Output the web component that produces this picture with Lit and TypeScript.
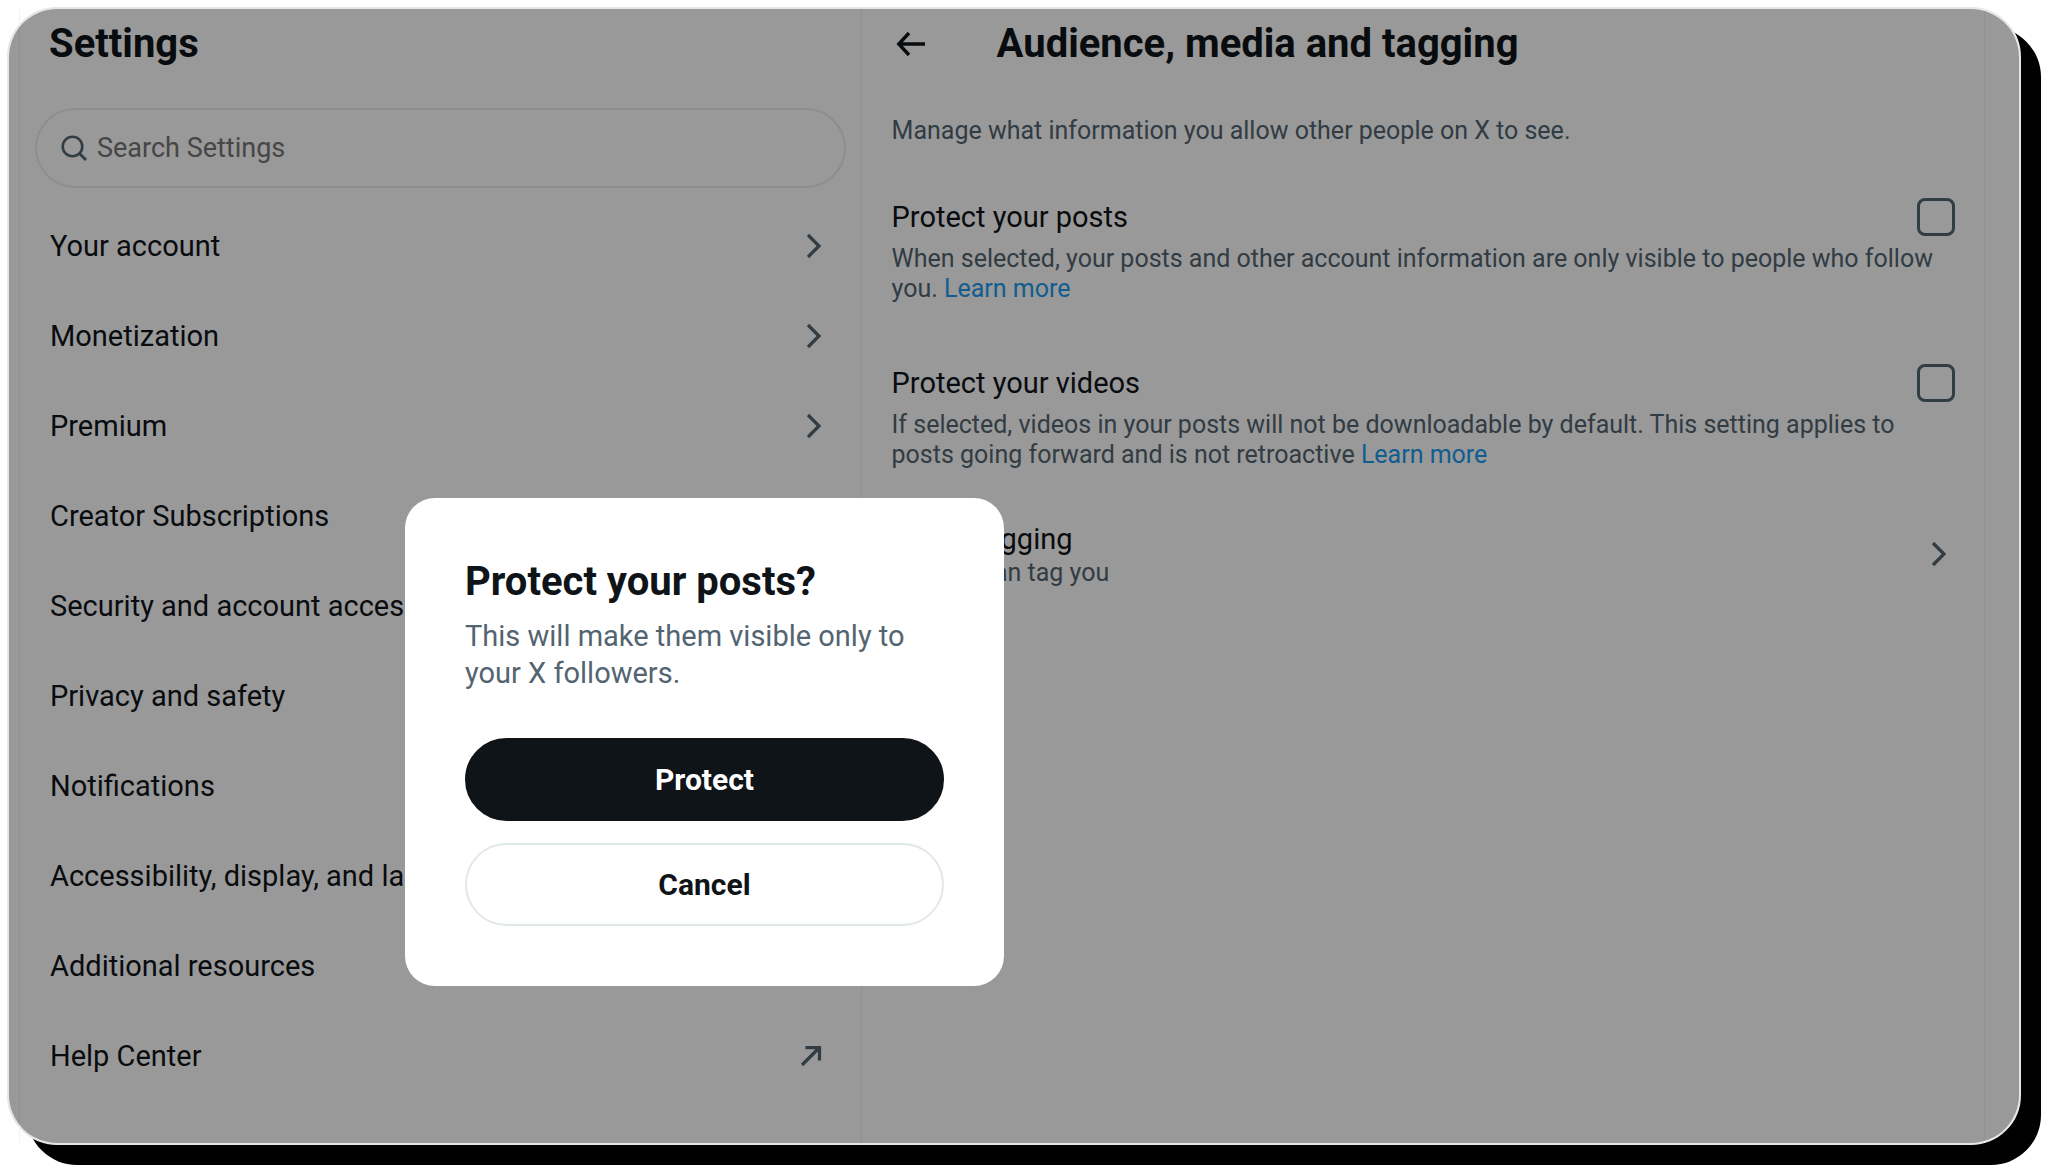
import { LitElement, html, css, svg } from "lit";
import { customElement, property, state } from "lit/decorators.js";

const chevron = html`<svg class="chevron" viewBox="0 0 16 26" width="16" height="26" aria-hidden="true">
  ${svg`<path d="M2 2 L13 13 L2 24" fill="none" stroke="#536471" stroke-width="3.2" />`}
</svg>`;

const external = html`<svg class="external" viewBox="0 0 22 22" width="22" height="22" aria-hidden="true">
  ${svg`<path d="M2 20 L19 3 M5.500 2.600 H19.500 V15.500" fill="none" stroke="#536471" stroke-width="3.2" />`}
</svg>`;

interface NavItem {
  label: string;
  external?: boolean;
}

const NAV: NavItem[] = [
  { label: "Your account" },
  { label: "Monetization" },
  { label: "Premium" },
  { label: "Creator Subscriptions" },
  { label: "Security and account access" },
  { label: "Privacy and safety" },
  { label: "Notifications" },
  { label: "Accessibility, display, and languages" },
  { label: "Additional resources" },
  { label: "Help Center", external: true },
];

@customElement("settings-nav")
class SettingsNav extends LitElement {
  static styles = css`
    :host {
      display: block;
      padding-top: 11px;
      border-left: 1px solid #eff3f4;
      border-right: 1px solid #eff3f4;
      box-sizing: border-box;
      min-width: 0;
    }
    .title {
      margin: 0;
      padding: 0 29px;
      font-size: 40px;
      line-height: 48px;
      font-weight: 700;
    }
    .search {
      display: flex;
      align-items: center;
      gap: 10px;
      height: 80px;
      box-sizing: border-box;
      margin: 40px 15px 13px;
      padding: 0 24px;
      border: 2px solid #e9ecee;
      border-radius: 40px;
    }
    .search svg {
      flex: none;
    }
    .field {
      flex: 1;
      min-width: 0;
      padding: 0;
      border: 0;
      outline: 0;
      background: transparent;
      color: #0f1419;
      font: inherit;
      font-size: 27px;
      line-height: 38px;
    }
    .field::placeholder {
      color: #757575;
      opacity: 1;
    }
    .list {
      margin: 0;
      padding: 0;
      list-style: none;
    }
    .row {
      display: flex;
      align-items: center;
      justify-content: space-between;
      height: 90px;
      padding: 0 39px 0 30px;
      color: inherit;
      text-decoration: none;
      font-size: 29px;
      line-height: 38px;
    }
  `;

  render() {
    return html`
      <h1 class="title">Settings</h1>
      <label class="search">
        <svg viewBox="0 0 26 26" width="26" height="26" aria-hidden="true">
          <circle cx="11.500" cy="11.500" r="9.800" fill="none" stroke="#536471" stroke-width="2.600" />
          <path d="M18.500 18.500 L25 25" stroke="#536471" stroke-width="2.800" />
        </svg>
        <input class="field" type="text" placeholder="Search Settings" aria-label="Search Settings" />
      </label>
      <nav>
        <ul class="list">
          ${NAV.map(
            (item) => html`<li>
              <a class="row" href="#"><span>${item.label}</span>${item.external ? external : chevron}</a>
            </li>`
          )}
        </ul>
      </nav>
    `;
  }
}

@customElement("check-setting")
class CheckSetting extends LitElement {
  @property() heading = "";
  @property() text = "";

  static styles = css`
    :host {
      display: block;
    }
    .head {
      display: flex;
      align-items: center;
      justify-content: space-between;
      font-size: 29px;
      line-height: 38px;
    }
    .box {
      appearance: none;
      flex: none;
      width: 38px;
      height: 38px;
      margin: 0;
      border: 3px solid #536471;
      border-radius: 8px;
    }
    .box:checked {
      background: #1d9bf0;
      border-color: #1d9bf0;
    }
    .text {
      margin: 8px 0 0;
      color: #536471;
      font-size: 25px;
      line-height: 30px;
    }
    .link {
      color: #1d9bf0;
      text-decoration: none;
    }
  `;

  render() {
    return html`
      <div class="head">
        <label for="box">${this.heading}</label>
        <input class="box" id="box" type="checkbox" />
      </div>
      <p class="text">${this.text} <a class="link" href="#">Learn more</a></p>
    `;
  }
}

@customElement("audience-panel")
class AudiencePanel extends LitElement {
  static styles = css`
    :host {
      display: block;
      padding: 11px 29px 0 30px;
      border-right: 1px solid #eff3f4;
      box-sizing: border-box;
      min-width: 0;
    }
    .bar {
      display: flex;
      align-items: center;
      gap: 67px;
      height: 48px;
    }
    .back {
      display: flex;
      padding: 4px;
      border: 0;
      background: transparent;
    }
    .title {
      margin: 0;
      font-size: 40px;
      line-height: 48px;
      font-weight: 700;
    }
    .intro {
      margin: 48px 0 52px;
      color: #536471;
      font-size: 25px;
      line-height: 30px;
    }
    .settings {
      display: grid;
      gap: 60px;
      margin-bottom: 50px;
    }
    .tagging {
      display: flex;
      align-items: center;
      justify-content: space-between;
      padding-right: 8px;
      color: inherit;
      text-decoration: none;
    }
    .label {
      display: block;
      font-size: 29px;
      line-height: 38px;
    }
    .note {
      display: block;
      color: #536471;
      font-size: 25px;
      line-height: 30px;
    }
  `;

  render() {
    return html`
      <div class="bar">
        <button class="back" aria-label="Back">
          <svg viewBox="0 0 30 26" width="30" height="26" aria-hidden="true">
            <path d="M13 2 L2.800 13 L13 24 M3 13 H29" fill="none" stroke="#0f1419" stroke-width="3.400" />
          </svg>
        </button>
        <h2 class="title">Audience, media and tagging</h2>
      </div>
      <p class="intro">Manage what information you allow other people on X to see.</p>
      <div class="settings">
        <check-setting
          heading="Protect your posts"
          text="When selected, your posts and other account information are only visible to people who follow you."
        ></check-setting>
        <check-setting
          heading="Protect your videos"
          text="If selected, videos in your posts will not be downloadable by default. This setting applies to posts going forward and is not retroactive"
        ></check-setting>
      </div>
      <a class="tagging" href="#">
        <span>
          <span class="label">Photo tagging</span>
          <span class="note">Anyone can tag you</span>
        </span>
        ${chevron}
      </a>
    `;
  }
}

@customElement("app-root")
class AppRoot extends LitElement {
  @state() private open = true;

  static styles = css`
    :host {
      display: flex;
      box-sizing: border-box;
      min-height: 100vh;
      padding: 7px 27px 27px 7px;
      background: #fff;
      color: #0f1419;
      font-family: Roboto, "Liberation Sans", sans-serif;
    }
    .card {
      flex: 1;
      display: grid;
      grid-template-columns: 3fr 4fr;
      position: relative;
      box-sizing: border-box;
      padding: 0 34px 0 10px;
      border: 2px solid #e6e6e6;
      border-radius: 50px;
      background: #fff;
      box-shadow: 20px 20px 0 #000;
    }
    .overlay {
      position: absolute;
      inset: 0;
      border-radius: 48px;
      background: rgba(0, 0, 0, 0.4);
    }
    .dialog {
      position: absolute;
      top: 489px;
      left: 396px;
      box-sizing: border-box;
      width: 599px;
      padding: 60px;
      border-radius: 30px;
      background: #fff;
    }
    .heading {
      margin: 0 0 12px;
      font-size: 40px;
      line-height: 48px;
      font-weight: 700;
    }
    .message {
      margin: 0 0 46px;
      color: #536471;
      font-size: 29px;
      line-height: 37px;
    }
    .actions {
      display: grid;
      gap: 22px;
    }
    .action {
      height: 83px;
      border: 2px solid #0f1419;
      border-radius: 42px;
      background: #0f1419;
      color: #fff;
      font-family: inherit;
      font-size: 30px;
      line-height: 38px;
      font-weight: 700;
    }
    .plain {
      border-color: #e1e8eb;
      background: #fff;
      color: #0f1419;
    }
  `;

  private close = () => {
    this.open = false;
  };

  render() {
    return html`
      <div class="card">
        <settings-nav></settings-nav>
        <audience-panel></audience-panel>
        ${this.open
          ? html`<div class="overlay">
              <div class="dialog" role="dialog" aria-modal="true" aria-labelledby="heading">
                <h2 class="heading" id="heading">Protect your posts?</h2>
                <p class="message">This will make them visible only to your X followers.</p>
                <div class="actions">
                  <button class="action" @click=${this.close}>Protect</button>
                  <button class="action plain" @click=${this.close}>Cancel</button>
                </div>
              </div>
            </div>`
          : null}
      </div>
    `;
  }
}
